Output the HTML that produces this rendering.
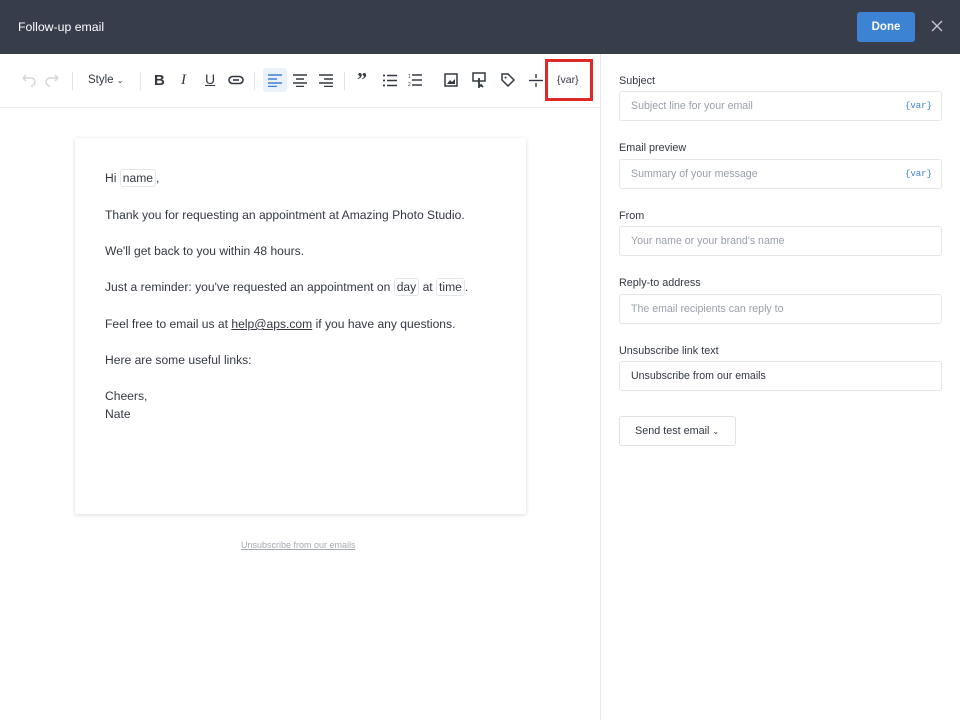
<!DOCTYPE html>
<html><head><style>
*{box-sizing:border-box;margin:0;padding:0}
body{width:960px;height:720px;overflow:hidden;font-family:"Liberation Sans",sans-serif;background:#fff;position:relative;color:#333842}
.hdr{position:absolute;left:0;top:0;width:960px;height:54px;background:#373d4b}
.hdr .t{position:absolute;left:18px;top:20px;color:#fff;font-size:12.3px}
.done{position:absolute;left:857px;top:12px;width:58px;height:30px;background:#3d83d4;border-radius:3px;color:#fff;font-size:11.5px;font-weight:bold;text-align:center;line-height:30px}
.x{position:absolute;left:931px;top:20px}
.tb{position:absolute;left:0;top:54px;width:600px;height:54px;border-bottom:1px solid #e8ebf0}
.ic{position:absolute;top:73px}
.sep{position:absolute;top:72px;width:1px;height:18px;background:#e3e6ea}
.card{position:absolute;left:75px;top:138px;width:451px;height:376px;background:#fff;box-shadow:0 1px 4px rgba(0,0,0,.14);border-radius:2px;font-size:12.1px;color:#333842}
.card p{position:absolute;left:30px}
.v{border:1px solid #e3e6ea;border-radius:3px;padding:1px 2px}
.divider{position:absolute;left:600px;top:54px;width:1px;height:666px;background:#e6e8ec}
.lbl{position:absolute;left:619px;font-size:10.8px;color:#333842}
.inp{position:absolute;left:619px;width:323px;height:30px;border:1px solid #e3e6ea;border-radius:3px;font-size:10.6px;color:#9aa0aa;padding-left:11px;line-height:29px}
.inp .var{position:absolute;right:9px;top:0;font-size:9px;color:#3d83d4;font-family:"Liberation Mono",monospace}
</style></head><body>
<div class="hdr"><div class="t">Follow-up email</div><div class="done">Done</div>
<svg class="x" width="12" height="12" viewBox="0 0 12 12"><path d="M1 1L11 11M11 1L1 11" stroke="#c5c9d1" stroke-width="1.3"/></svg></div>
<div class="tb"></div>
<svg class="ic" style="left:19px" width="18" height="14" viewBox="0 0 18 14"><path d="M4 5h8a4 4 0 0 1 0 8M4 5l3-3M4 5l3 3" stroke="#d3d6db" stroke-width="1.5" fill="none"/></svg>
<svg class="ic" style="left:44px" width="18" height="14" viewBox="0 0 18 14"><path d="M14 5H6a4 4 0 0 0 0 8M14 5l-3-3M14 5l-3 3" stroke="#d3d6db" stroke-width="1.5" fill="none"/></svg>
<div class="sep" style="left:72px"></div>
<div style="position:absolute;left:88px;top:74px;font-size:11.5px;color:#333842">Style <span style="font-size:8px">&#8964;</span></div>
<div class="sep" style="left:140px"></div>
<div style="position:absolute;left:154px;top:72px;font-size:15px;font-weight:bold;color:#333842">B</div>
<div style="position:absolute;left:181px;top:72px;font-size:15px;font-style:italic;font-family:'Liberation Serif';color:#333842">I</div>
<div style="position:absolute;left:205px;top:71px;font-size:14px;text-decoration:underline;color:#333842">U</div>
<svg class="ic" style="left:228px;top:75px" width="16" height="10" viewBox="0 0 16 10"><rect x="1" y="1.5" width="14" height="7" rx="3.5" stroke="#333842" stroke-width="1.6" fill="none"/><path d="M5 5h6" stroke="#333842" stroke-width="1.6"/></svg>
<div class="sep" style="left:254px"></div>
<div style="position:absolute;left:263px;top:68px;width:24px;height:24px;background:#eaf1fb;border-radius:3px"></div>
<svg class="ic" style="left:268px;top:74px" width="14" height="13"><path d="M0 1h14M0 5h9M0 9h14M0 12.5h9" stroke="#3d83d4" stroke-width="1.5"/></svg>
<svg class="ic" style="left:293px;top:74px" width="14" height="13"><path d="M0 1h14M3 5h8M0 9h14M3 12.5h8" stroke="#333842" stroke-width="1.5"/></svg>
<svg class="ic" style="left:319px;top:74px" width="14" height="13"><path d="M0 1h14M5 5h9M0 9h14M5 12.5h9" stroke="#333842" stroke-width="1.5"/></svg>
<div class="sep" style="left:344px"></div>
<div style="position:absolute;left:357px;top:69px;font-size:20px;font-weight:bold;color:#333842;font-family:'Liberation Serif'">&#8221;</div>
<svg class="ic" style="left:383px;top:74px" width="14" height="13"><path d="M0 1.5h2M0 6.5h2M0 11.5h2" stroke="#333842" stroke-width="1.8"/><path d="M4 1.5h10M4 6.5h10M4 11.5h10" stroke="#333842" stroke-width="1.4"/></svg>
<svg class="ic" style="left:408px;top:73px" width="14" height="14"><text x="0" y="5" font-size="5" fill="#333842">1</text><text x="0" y="13" font-size="5" fill="#333842">2</text><path d="M4 2h10M4 7h10M4 12h10" stroke="#333842" stroke-width="1.4"/></svg>
<svg class="ic" style="left:444px;top:73px" width="14" height="14"><rect x="1" y="1" width="12" height="12" stroke="#333842" stroke-width="1.5" fill="none"/><path d="M3 11l3-4 2 2 3-3v5z" fill="#333842"/></svg>
<svg class="ic" style="left:472px;top:72px" width="14" height="16"><rect x="1" y="1" width="12" height="8" stroke="#333842" stroke-width="1.5" fill="none"/><path d="M7 6v9l2-2 2 2" stroke="#333842" stroke-width="1.8" fill="none"/></svg>
<svg class="ic" style="left:501px;top:73px" width="14" height="14"><path d="M1 1h6l6 6-6 6-6-6z" stroke="#333842" stroke-width="1.5" fill="none"/><circle cx="4.5" cy="4.5" r="1" fill="#333842"/></svg>
<svg class="ic" style="left:529px;top:74px" width="14" height="13"><path d="M0 6.5h14" stroke="#333842" stroke-width="1.4"/><path d="M7 0v4M7 9v4" stroke="#333842" stroke-width="1.4"/></svg>
<div style="position:absolute;left:545px;top:59px;width:48px;height:42px;border:3px solid #e02a2a"></div>
<div style="position:absolute;left:557px;top:74px;font-size:10.5px;color:#333842">{var}</div>
<div class="card">
<p style="top:33px">Hi <span class="v">name</span>,</p>
<p style="top:70px">Thank you for requesting an appointment at Amazing Photo Studio.</p>
<p style="top:106px">We'll get back to you within 48 hours.</p>
<p style="top:142px">Just a reminder: you've requested an appointment on <span class="v">day</span> at <span class="v">time</span>.</p>
<p style="top:179px">Feel free to email us at <u>help@aps.com</u> if you have any questions.</p>
<p style="top:215px">Here are some useful links:</p>
<p style="top:251px">Cheers,</p>
<p style="top:269px">Nate</p>
</div>
<div style="position:absolute;left:241px;top:540px;font-size:9px;color:#a6abb3;text-decoration:underline">Unsubscribe from our emails</div>
<div class="divider"></div>
<div class="lbl" style="top:75px">Subject</div>
<div class="inp" style="top:91px">Subject line for your email<span class="var">{var}</span></div>
<div class="lbl" style="top:142px">Email preview</div>
<div class="inp" style="top:159px">Summary of your message<span class="var">{var}</span></div>
<div class="lbl" style="top:210px">From</div>
<div class="inp" style="top:226px">Your name or your brand's name</div>
<div class="lbl" style="top:277px">Reply-to address</div>
<div class="inp" style="top:294px">The email recipients can reply to</div>
<div class="lbl" style="top:345px">Unsubscribe link text</div>
<div class="inp" style="top:361px;color:#333842">Unsubscribe from our emails</div>
<div style="position:absolute;left:619px;top:416px;width:117px;height:30px;border:1px solid #dfe2e7;border-radius:3px;font-size:10.8px;line-height:29px;padding-left:15px;color:#333842">Send test email <span style="font-size:8px">&#8964;</span></div>
</body></html>
